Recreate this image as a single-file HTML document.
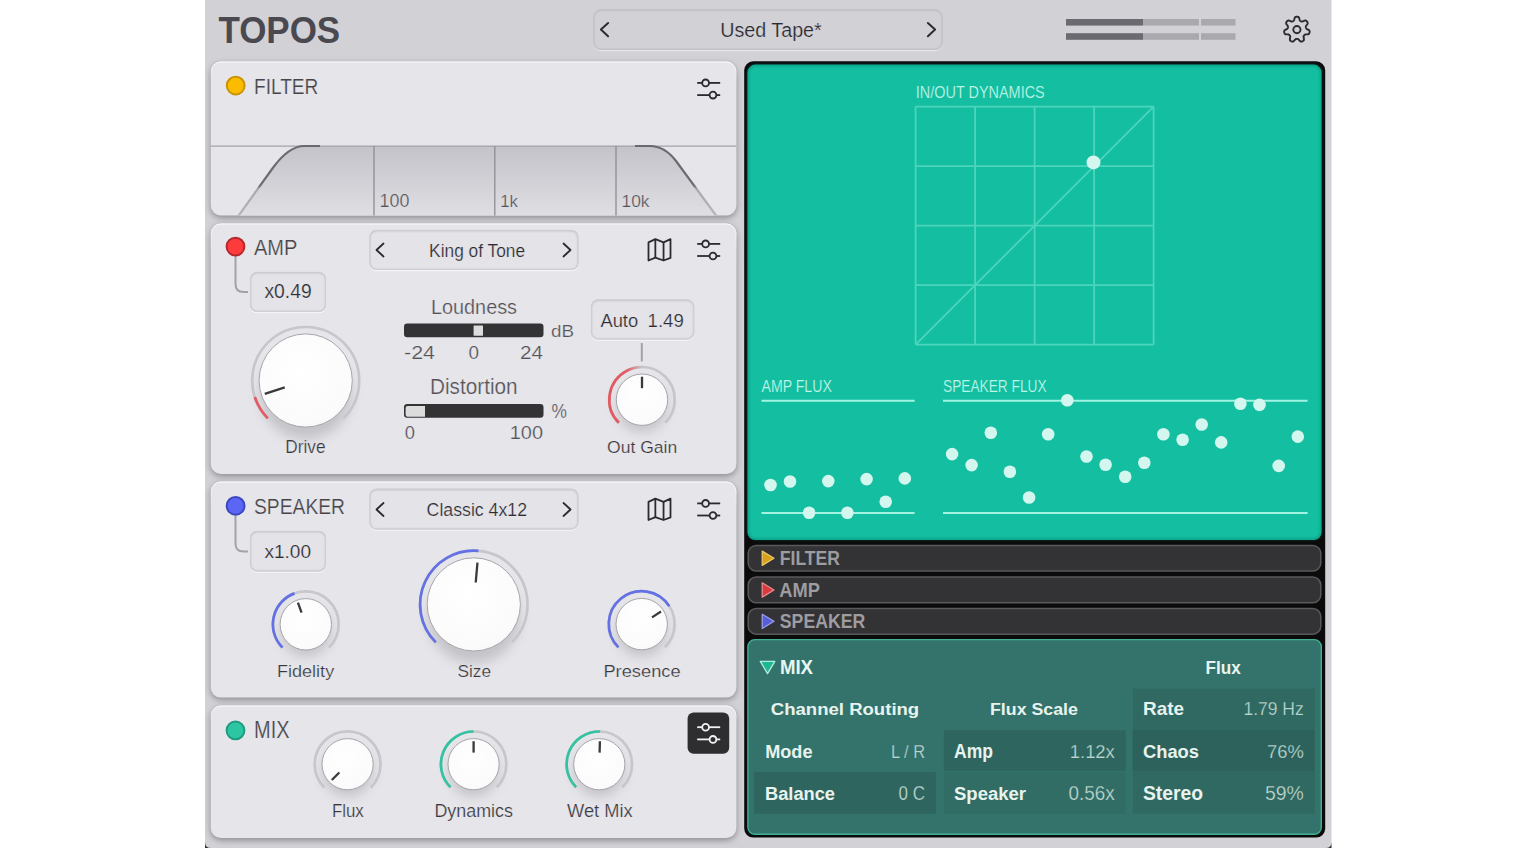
<!DOCTYPE html>
<html><head><meta charset="utf-8"><title>TOPOS</title>
<style>
html,body{margin:0;padding:0;background:#ffffff;width:1536px;height:848px;overflow:hidden}
svg{display:block;font-family:"Liberation Sans",sans-serif}
</style></head><body>
<svg width="1536" height="848" viewBox="0 0 1536 848">
<defs>
<filter id="kshadow" x="-50%" y="-50%" width="200%" height="200%"><feGaussianBlur stdDeviation="6"/></filter>
<filter id="pshadow" x="-10%" y="-10%" width="120%" height="130%"><feGaussianBlur stdDeviation="3"/></filter>
<filter id="blur1"><feGaussianBlur stdDeviation="1"/></filter>
<linearGradient id="phl" x1="0" y1="0" x2="0" y2="1"><stop offset="0" stop-color="#fbfaff"/><stop offset="0.15" stop-color="#e6e5ea" stop-opacity="0"/></linearGradient>
<radialGradient id="knobg" cx="0.45" cy="0.4" r="0.7"><stop offset="0" stop-color="#ffffff"/><stop offset="0.8" stop-color="#fbfbfc"/><stop offset="1" stop-color="#f1f1f3"/></radialGradient>
<linearGradient id="fillg" x1="0" y1="146" x2="0" y2="215" gradientUnits="userSpaceOnUse"><stop offset="0" stop-color="#c4c3c9"/><stop offset="1" stop-color="#dfdee3"/></linearGradient>
<linearGradient id="curveg" x1="0" y1="146" x2="0" y2="215" gradientUnits="userSpaceOnUse"><stop offset="0" stop-color="#6a6970"/><stop offset="0.58" stop-color="#6e6d73"/><stop offset="0.62" stop-color="#a9a8ad"/><stop offset="1" stop-color="#b5b4b9"/></linearGradient>
<linearGradient id="boxg" x1="0" y1="0" x2="0" y2="1"><stop offset="0" stop-color="#dddce1"/><stop offset="0.35" stop-color="#e3e2e7"/><stop offset="1" stop-color="#e5e4e9"/></linearGradient>
<clipPath id="fclip"><rect x="210.8" y="61.5" width="525.6" height="154" rx="10"/></clipPath>
<clipPath id="vclip"><rect x="747.4" y="64.6" width="574.2" height="475.4" rx="8"/></clipPath>
</defs>
<rect x="205" y="0" width="1126.5" height="848" fill="#d2d1d6"/>
<path d="M205,842 Q205,848 211,848 L205,848 Z" fill="#333"/>
<path d="M1331.5,842 Q1331.5,848 1325.5,848 L1331.5,848 Z" fill="#333"/>
<text x="218.40" y="42.80" font-size="36.82" font-weight="bold" textLength="121.82" lengthAdjust="spacingAndGlyphs" fill="#4a494f" >TOPOS</text>
<clipPath id="bc1"><rect x="593.3" y="9.3" width="349.5" height="40.7" rx="8"/></clipPath><rect x="593.3" y="10.5" width="349.5" height="40.7" rx="8" fill="#e8e7ec"/><rect x="593.3" y="9.3" width="349.5" height="40.7" rx="8" fill="#d2d1d6"/><g clip-path="url(#bc1)"><rect x="592.3" y="8.8" width="351.5" height="42.2" rx="9" fill="none" stroke="#b3b2b7" stroke-width="3" filter="url(#blur1)"/></g><rect x="593.6999999999999" y="9.700000000000001" width="348.7" height="39.900000000000006" rx="7.6" fill="none" stroke="#c3c2c7" stroke-width="0.8"/>
<text x="720.30" y="36.60" font-size="19.72" font-weight="normal" textLength="101.40" lengthAdjust="spacingAndGlyphs" fill="#2c2b30" stroke="#d2d1d6" stroke-width="0.22" >Used Tape*</text>
<path d="M608.10,23.00 L600.90,29.60 L608.10,36.20" fill="none" stroke="#2b2b2f" stroke-width="2.0" stroke-linecap="round" stroke-linejoin="round"/>
<path d="M927.90,23.00 L935.10,29.60 L927.90,36.20" fill="none" stroke="#2b2b2f" stroke-width="2.0" stroke-linecap="round" stroke-linejoin="round"/>
<rect x="1066" y="19" width="77" height="6.6" fill="#6b6a70"/>
<rect x="1143" y="19" width="56" height="6.6" fill="#aaa9ae"/>
<rect x="1201" y="19" width="34.5" height="6.6" fill="#aaa9ae"/>
<rect x="1066" y="33.2" width="77" height="6.6" fill="#6b6a70"/>
<rect x="1143" y="33.2" width="56" height="6.6" fill="#aaa9ae"/>
<rect x="1201" y="33.2" width="34.5" height="6.6" fill="#aaa9ae"/>
<path d="M1296.90,16.65 L1297.48,16.69 L1298.05,16.82 L1298.59,17.14 L1299.05,17.77 L1299.37,18.78 L1299.61,19.79 L1299.87,20.45 L1300.19,20.82 L1300.55,21.07 L1300.91,21.27 L1301.30,21.43 L1301.71,21.55 L1302.20,21.57 L1302.88,21.36 L1303.82,20.92 L1304.81,20.55 L1305.59,20.51 L1306.17,20.74 L1306.63,21.10 L1307.02,21.53 L1307.36,22.00 L1307.60,22.53 L1307.70,23.15 L1307.48,23.90 L1306.90,24.78 L1306.26,25.60 L1305.91,26.22 L1305.81,26.70 L1305.84,27.13 L1305.92,27.54 L1306.03,27.94 L1306.19,28.34 L1306.49,28.74 L1307.07,29.14 L1308.00,29.60 L1308.91,30.14 L1309.43,30.73 L1309.61,31.32 L1309.62,31.91 L1309.53,32.48 L1309.36,33.04 L1309.10,33.56 L1308.67,34.02 L1307.95,34.32 L1306.90,34.42 L1305.87,34.42 L1305.16,34.54 L1304.72,34.76 L1304.40,35.05 L1304.13,35.37 L1303.89,35.70 L1303.67,36.08 L1303.55,36.56 L1303.60,37.27 L1303.82,38.28 L1303.96,39.32 L1303.83,40.10 L1303.48,40.61 L1303.02,40.98 L1302.52,41.27 L1301.98,41.48 L1301.41,41.61 L1300.79,41.56 L1300.10,41.19 L1299.37,40.42 L1298.72,39.62 L1298.19,39.14 L1297.74,38.94 L1297.32,38.87 L1296.90,38.85 L1296.48,38.87 L1296.06,38.94 L1295.61,39.14 L1295.08,39.62 L1294.43,40.42 L1293.70,41.19 L1293.01,41.56 L1292.39,41.61 L1291.82,41.48 L1291.28,41.27 L1290.78,40.98 L1290.32,40.61 L1289.97,40.10 L1289.84,39.32 L1289.98,38.28 L1290.20,37.27 L1290.25,36.56 L1290.13,36.08 L1289.91,35.70 L1289.67,35.37 L1289.40,35.05 L1289.08,34.76 L1288.64,34.54 L1287.93,34.42 L1286.90,34.42 L1285.85,34.32 L1285.13,34.02 L1284.70,33.56 L1284.44,33.04 L1284.27,32.48 L1284.18,31.91 L1284.19,31.32 L1284.37,30.73 L1284.89,30.14 L1285.80,29.60 L1286.73,29.14 L1287.31,28.74 L1287.61,28.34 L1287.77,27.94 L1287.88,27.54 L1287.96,27.13 L1287.99,26.70 L1287.89,26.22 L1287.54,25.60 L1286.90,24.78 L1286.32,23.90 L1286.10,23.15 L1286.20,22.53 L1286.44,22.00 L1286.78,21.53 L1287.17,21.10 L1287.63,20.74 L1288.21,20.51 L1288.99,20.55 L1289.98,20.92 L1290.92,21.36 L1291.60,21.57 L1292.09,21.55 L1292.50,21.43 L1292.89,21.27 L1293.25,21.07 L1293.61,20.82 L1293.93,20.45 L1294.19,19.79 L1294.43,18.78 L1294.75,17.77 L1295.21,17.14 L1295.75,16.82 L1296.32,16.69 L1296.90,16.65 Z" fill="none" stroke="#2b2b2f" stroke-width="1.9" stroke-linejoin="round"/><circle cx="1296.9" cy="29.6" r="3.6" fill="none" stroke="#2b2b2f" stroke-width="1.9"/>
<rect x="210.8" y="61.5" width="525.5999999999999" height="154.0" rx="10" fill="#000" fill-opacity="0.34" filter="url(#pshadow)" transform="translate(0,2.2)"/><rect x="210.8" y="61.5" width="525.5999999999999" height="154.0" rx="10" fill="#e6e5ea"/><rect x="211.3" y="62.0" width="524.5999999999999" height="153.0" rx="9.5" fill="none" stroke="url(#phl)" stroke-width="1"/>
<rect x="210.8" y="223.5" width="525.5999999999999" height="250.5" rx="10" fill="#000" fill-opacity="0.34" filter="url(#pshadow)" transform="translate(0,2.2)"/><rect x="210.8" y="223.5" width="525.5999999999999" height="250.5" rx="10" fill="#e6e5ea"/><rect x="211.3" y="224.0" width="524.5999999999999" height="249.5" rx="9.5" fill="none" stroke="url(#phl)" stroke-width="1"/>
<rect x="210.8" y="481.5" width="525.5999999999999" height="216.10000000000002" rx="10" fill="#000" fill-opacity="0.34" filter="url(#pshadow)" transform="translate(0,2.2)"/><rect x="210.8" y="481.5" width="525.5999999999999" height="216.10000000000002" rx="10" fill="#e6e5ea"/><rect x="211.3" y="482.0" width="524.5999999999999" height="215.10000000000002" rx="9.5" fill="none" stroke="url(#phl)" stroke-width="1"/>
<rect x="210.8" y="705.5" width="525.5999999999999" height="132.5" rx="10" fill="#000" fill-opacity="0.34" filter="url(#pshadow)" transform="translate(0,2.2)"/><rect x="210.8" y="705.5" width="525.5999999999999" height="132.5" rx="10" fill="#e6e5ea"/><rect x="211.3" y="706.0" width="524.5999999999999" height="131.5" rx="9.5" fill="none" stroke="url(#phl)" stroke-width="1"/>
<circle cx="235.7" cy="85.6" r="8.9" fill="#fbbc00" stroke="#c99400" stroke-width="2"/>
<text x="254.00" y="93.70" font-size="22.97" font-weight="normal" textLength="64.39" lengthAdjust="spacingAndGlyphs" fill="#454449" stroke="#e6e5ea" stroke-width="0.22" >FILTER</text>
<line x1="697.2" y1="82.9" x2="702.2" y2="82.9" stroke="#2b2b2f" stroke-width="1.8"/>
<line x1="709.0" y1="82.9" x2="720.2" y2="82.9" stroke="#2b2b2f" stroke-width="1.8"/>
<circle cx="705.6" cy="82.9" r="3.4" fill="none" stroke="#2b2b2f" stroke-width="1.8"/>
<line x1="697.2" y1="95.1" x2="709.6" y2="95.1" stroke="#2b2b2f" stroke-width="1.8"/>
<line x1="716.4" y1="95.1" x2="720.2" y2="95.1" stroke="#2b2b2f" stroke-width="1.8"/>
<circle cx="713.0" cy="95.1" r="3.4" fill="none" stroke="#2b2b2f" stroke-width="1.8"/>
<g clip-path="url(#fclip)">
<path d="M238.4,216 L272.8,168 Q288.8,146 304.3,146 L649.7,146 Q664.7,146 676,161 L716.4,216 Z" fill="url(#fillg)"/>
<line x1="205" y1="146.1" x2="740" y2="146.1" stroke="#a3a2a7" stroke-width="1.4"/>
<line x1="374" y1="146" x2="374" y2="216" stroke="#8d8c91" stroke-width="1.3"/>
<line x1="494.8" y1="146" x2="494.8" y2="216" stroke="#8d8c91" stroke-width="1.3"/>
<line x1="616" y1="146" x2="616" y2="216" stroke="#8d8c91" stroke-width="1.3"/>
<path d="M238.4,216 L272.8,168 Q288.8,146 304.3,146 L320,146" fill="none" stroke="url(#curveg)" stroke-width="2.2"/>
<path d="M635,146 L649.7,146 Q664.7,146 676,161 L716.4,216" fill="none" stroke="url(#curveg)" stroke-width="2.2"/>
</g>
<text x="379.60" y="207.00" font-size="17.48" font-weight="normal" textLength="29.91" lengthAdjust="spacingAndGlyphs" fill="#535257" stroke="#e6e5ea" stroke-width="0.22" >100</text>
<text x="500.20" y="207.00" font-size="16.83" font-weight="normal" textLength="17.77" lengthAdjust="spacingAndGlyphs" fill="#535257" stroke="#e6e5ea" stroke-width="0.22" >1k</text>
<text x="621.50" y="207.00" font-size="16.83" font-weight="normal" textLength="28.07" lengthAdjust="spacingAndGlyphs" fill="#535257" stroke="#e6e5ea" stroke-width="0.22" >10k</text>
<path d="M235.5,256 L235.5,284 Q235.5,292 243.5,292 L248,292" fill="none" stroke="#a3a2a7" stroke-width="2"/>
<circle cx="235.5" cy="246.6" r="8.9" fill="#fd3b3d" stroke="#b5282e" stroke-width="2"/>
<text x="254.00" y="254.50" font-size="22.67" font-weight="normal" textLength="43.40" lengthAdjust="spacingAndGlyphs" fill="#454449" stroke="#e6e5ea" stroke-width="0.22" >AMP</text>
<clipPath id="bc2"><rect x="369.4" y="230" width="209.0" height="40" rx="7"/></clipPath><rect x="369.4" y="231.2" width="209.0" height="40" rx="7" fill="#f7f6fb"/><rect x="369.4" y="230" width="209.0" height="40" rx="7" fill="#e4e3e8"/><g clip-path="url(#bc2)"><rect x="368.4" y="229.5" width="211.0" height="41.5" rx="8" fill="none" stroke="#b9b8bd" stroke-width="3" filter="url(#blur1)"/></g><rect x="369.79999999999995" y="230.4" width="208.2" height="39.2" rx="6.6" fill="none" stroke="#cfced3" stroke-width="0.8"/>
<text x="429.10" y="256.90" font-size="18.76" font-weight="normal" textLength="95.99" lengthAdjust="spacingAndGlyphs" fill="#2c2b30" stroke="#e3e2e7" stroke-width="0.22" >King of Tone</text>
<path d="M383.50,243.50 L376.50,250.00 L383.50,256.50" fill="none" stroke="#2b2b2f" stroke-width="1.8" stroke-linecap="round" stroke-linejoin="round"/>
<path d="M563.50,243.50 L570.50,250.00 L563.50,256.50" fill="none" stroke="#2b2b2f" stroke-width="1.8" stroke-linecap="round" stroke-linejoin="round"/>
<path d="M648.50,242.40 L655.35,239.10 L663.55,242.40 L670.50,239.10 L670.50,257.90 L663.55,260.50 L655.35,257.60 L648.50,260.50 Z" fill="none" stroke="#2b2b2f" stroke-width="1.8" stroke-linejoin="round"/><line x1="655.35" y1="239.10" x2="655.35" y2="257.60" stroke="#2b2b2f" stroke-width="1.8"/><line x1="663.55" y1="242.40" x2="663.55" y2="260.50" stroke="#2b2b2f" stroke-width="1.8"/>
<line x1="697.2" y1="243.9" x2="702.2" y2="243.9" stroke="#2b2b2f" stroke-width="1.8"/>
<line x1="709.0" y1="243.9" x2="720.2" y2="243.9" stroke="#2b2b2f" stroke-width="1.8"/>
<circle cx="705.6" cy="243.9" r="3.4" fill="none" stroke="#2b2b2f" stroke-width="1.8"/>
<line x1="697.2" y1="256.0" x2="709.6" y2="256.0" stroke="#2b2b2f" stroke-width="1.8"/>
<line x1="716.4" y1="256.0" x2="720.2" y2="256.0" stroke="#2b2b2f" stroke-width="1.8"/>
<circle cx="713.0" cy="256.0" r="3.4" fill="none" stroke="#2b2b2f" stroke-width="1.8"/>
<clipPath id="bc3"><rect x="250" y="272" width="76" height="40" rx="7"/></clipPath><rect x="250" y="273.2" width="76" height="40" rx="7" fill="#f7f6fb"/><rect x="250" y="272" width="76" height="40" rx="7" fill="#e4e3e8"/><g clip-path="url(#bc3)"><rect x="249" y="271.5" width="78" height="41.5" rx="8" fill="none" stroke="#b9b8bd" stroke-width="3" filter="url(#blur1)"/></g><rect x="250.4" y="272.4" width="75.2" height="39.2" rx="6.6" fill="none" stroke="#cfced3" stroke-width="0.8"/>
<text x="264.40" y="298.40" font-size="19.34" font-weight="normal" textLength="47.31" lengthAdjust="spacingAndGlyphs" fill="#2c2b30" stroke="#e3e2e7" stroke-width="0.22" >x0.49</text>
<text x="431.00" y="313.80" font-size="19.72" font-weight="normal" textLength="86.00" lengthAdjust="spacingAndGlyphs" fill="#545358" stroke="#e6e5ea" stroke-width="0.22" >Loudness</text>
<rect x="404" y="323.6" width="139.5" height="13.7" rx="3.2" fill="#333335"/>
<rect x="473.6" y="325.4" width="9.4" height="10.4" rx="0.5" fill="#dcdcdd"/>
<text x="551.00" y="337.00" font-size="17.24" font-weight="normal" textLength="23.00" lengthAdjust="spacingAndGlyphs" fill="#545358" stroke="#e6e5ea" stroke-width="0.22" >dB</text>
<text x="404.00" y="359.00" font-size="18.62" font-weight="normal" textLength="31.01" lengthAdjust="spacingAndGlyphs" fill="#545358" stroke="#e6e5ea" stroke-width="0.22" >-24</text>
<text x="468.50" y="359.00" font-size="18.62" font-weight="normal" textLength="10.50" lengthAdjust="spacingAndGlyphs" fill="#545358" stroke="#e6e5ea" stroke-width="0.22" >0</text>
<text x="520.00" y="359.00" font-size="18.62" font-weight="normal" textLength="23.01" lengthAdjust="spacingAndGlyphs" fill="#545358" stroke="#e6e5ea" stroke-width="0.22" >24</text>
<text x="430.00" y="394.40" font-size="21.24" font-weight="normal" textLength="87.59" lengthAdjust="spacingAndGlyphs" fill="#545358" stroke="#e6e5ea" stroke-width="0.22" >Distortion</text>
<rect x="404" y="404.1" width="139.5" height="13.7" rx="3.2" fill="#333335"/>
<path d="M407.8,405.9 L425,405.9 L425,416.8 L407.8,416.8 Q405.6,416.8 405.6,414.6 L405.6,408.1 Q405.6,405.9 407.8,405.9 Z" fill="#dcdcdd"/>
<text x="551.60" y="418.00" font-size="19.45" font-weight="normal" textLength="15.40" lengthAdjust="spacingAndGlyphs" fill="#545358" stroke="#e6e5ea" stroke-width="0.22" >%</text>
<text x="404.80" y="439.00" font-size="18.62" font-weight="normal" textLength="10.20" lengthAdjust="spacingAndGlyphs" fill="#545358" stroke="#e6e5ea" stroke-width="0.22" >0</text>
<text x="509.70" y="439.00" font-size="18.62" font-weight="normal" textLength="33.31" lengthAdjust="spacingAndGlyphs" fill="#545358" stroke="#e6e5ea" stroke-width="0.22" >100</text>
<clipPath id="bc4"><rect x="591" y="299.6" width="103.20000000000005" height="39.89999999999998" rx="7"/></clipPath><rect x="591" y="300.8" width="103.20000000000005" height="39.89999999999998" rx="7" fill="#f7f6fb"/><rect x="591" y="299.6" width="103.20000000000005" height="39.89999999999998" rx="7" fill="#e4e3e8"/><g clip-path="url(#bc4)"><rect x="590" y="299.1" width="105.20000000000005" height="41.39999999999998" rx="8" fill="none" stroke="#b9b8bd" stroke-width="3" filter="url(#blur1)"/></g><rect x="591.4" y="300.0" width="102.40000000000005" height="39.09999999999998" rx="6.6" fill="none" stroke="#cfced3" stroke-width="0.8"/>
<text x="600.40" y="326.50" font-size="18.17" font-weight="normal" textLength="37.80" lengthAdjust="spacingAndGlyphs" fill="#2c2b30" stroke="#e3e2e7" stroke-width="0.22" >Auto</text>
<text x="647.60" y="326.50" font-size="17.91" font-weight="normal" textLength="36.21" lengthAdjust="spacingAndGlyphs" fill="#2c2b30" stroke="#e3e2e7" stroke-width="0.22" >1.49</text>
<line x1="641.8" y1="343" x2="641.8" y2="361.5" stroke="#a3a2a7" stroke-width="2"/>
<circle cx="305.7" cy="393.55" r="45.67" fill="#000" fill-opacity="0.15" filter="url(#kshadow)"/>
<path d="M267.87,418.33 A53.50,53.50 0 1 1 343.53,418.33" stroke="#c7c6cb" stroke-width="2.7" fill="none"/>
<path d="M267.87,418.33 A53.50,53.50 0 0 1 254.82,397.03" stroke="#e35a62" stroke-width="2.7" fill="none"/>
<circle cx="305.7" cy="380.5" r="46.6" fill="url(#knobg)" stroke="#a6a5aa" stroke-width="1"/>
<line x1="284.78" y1="387.30" x2="264.80" y2="393.79" stroke="#3a3a3e" stroke-width="2.3" stroke-linecap="butt"/>
<text x="285.30" y="452.70" font-size="17.66" font-weight="normal" textLength="40.19" lengthAdjust="spacingAndGlyphs" fill="#38373c" stroke="#e6e5ea" stroke-width="0.22" >Drive</text>
<circle cx="642.0" cy="406.90" r="25.19" fill="#000" fill-opacity="0.15" filter="url(#kshadow)"/>
<path d="M618.88,422.82 A32.70,32.70 0 1 1 665.12,422.82" stroke="#c7c6cb" stroke-width="2.7" fill="none"/>
<linearGradient id="kf1" gradientUnits="userSpaceOnUse" x1="626.65" y1="370.83" x2="642.00" y2="367.00"><stop offset="0" stop-color="#e35a62"/><stop offset="1" stop-color="#c7c6cb"/></linearGradient>
<path d="M618.88,422.82 A32.70,32.70 0 0 1 626.65,370.83" stroke="#e35a62" stroke-width="2.7" fill="none"/>
<path d="M626.40,370.96 A32.70,32.70 0 0 1 642.00,367.00" stroke="url(#kf1)" stroke-width="2.7" fill="none"/>
<circle cx="642.0" cy="399.7" r="25.7" fill="url(#knobg)" stroke="#a6a5aa" stroke-width="1"/>
<line x1="642.00" y1="388.20" x2="642.00" y2="376.70" stroke="#3a3a3e" stroke-width="2.3" stroke-linecap="butt"/>
<text x="607.00" y="452.70" font-size="16.55" font-weight="normal" textLength="70.20" lengthAdjust="spacingAndGlyphs" fill="#38373c" stroke="#e6e5ea" stroke-width="0.22" >Out Gain</text>
<path d="M235.5,515.5 L235.5,543.5 Q235.5,551.5 243.5,551.5 L248,551.5" fill="none" stroke="#a3a2a7" stroke-width="2"/>
<circle cx="235.6" cy="505.8" r="8.9" fill="#5b66f5" stroke="#3c47bf" stroke-width="2"/>
<text x="254.00" y="514.20" font-size="22.92" font-weight="normal" textLength="91.00" lengthAdjust="spacingAndGlyphs" fill="#454449" stroke="#e6e5ea" stroke-width="0.22" >SPEAKER</text>
<clipPath id="bc5"><rect x="369.4" y="488.8" width="209.0" height="40.80000000000001" rx="7"/></clipPath><rect x="369.4" y="490.0" width="209.0" height="40.80000000000001" rx="7" fill="#f7f6fb"/><rect x="369.4" y="488.8" width="209.0" height="40.80000000000001" rx="7" fill="#e4e3e8"/><g clip-path="url(#bc5)"><rect x="368.4" y="488.3" width="211.0" height="42.30000000000001" rx="8" fill="none" stroke="#b9b8bd" stroke-width="3" filter="url(#blur1)"/></g><rect x="369.79999999999995" y="489.2" width="208.2" height="40.000000000000014" rx="6.6" fill="none" stroke="#cfced3" stroke-width="0.8"/>
<text x="426.60" y="516.00" font-size="18.48" font-weight="normal" textLength="100.40" lengthAdjust="spacingAndGlyphs" fill="#2c2b30" stroke="#e3e2e7" stroke-width="0.22" >Classic 4x12</text>
<path d="M383.50,503.00 L376.50,509.50 L383.50,516.00" fill="none" stroke="#2b2b2f" stroke-width="1.8" stroke-linecap="round" stroke-linejoin="round"/>
<path d="M563.50,503.00 L570.50,509.50 L563.50,516.00" fill="none" stroke="#2b2b2f" stroke-width="1.8" stroke-linecap="round" stroke-linejoin="round"/>
<path d="M648.50,501.90 L655.35,498.60 L663.55,501.90 L670.50,498.60 L670.50,517.40 L663.55,520.00 L655.35,517.10 L648.50,520.00 Z" fill="none" stroke="#2b2b2f" stroke-width="1.8" stroke-linejoin="round"/><line x1="655.35" y1="498.60" x2="655.35" y2="517.10" stroke="#2b2b2f" stroke-width="1.8"/><line x1="663.55" y1="501.90" x2="663.55" y2="520.00" stroke="#2b2b2f" stroke-width="1.8"/>
<line x1="697.2" y1="503.4" x2="702.2" y2="503.4" stroke="#2b2b2f" stroke-width="1.8"/>
<line x1="709.0" y1="503.4" x2="720.2" y2="503.4" stroke="#2b2b2f" stroke-width="1.8"/>
<circle cx="705.6" cy="503.4" r="3.4" fill="none" stroke="#2b2b2f" stroke-width="1.8"/>
<line x1="697.2" y1="515.5" x2="709.6" y2="515.5" stroke="#2b2b2f" stroke-width="1.8"/>
<line x1="716.4" y1="515.5" x2="720.2" y2="515.5" stroke="#2b2b2f" stroke-width="1.8"/>
<circle cx="713.0" cy="515.5" r="3.4" fill="none" stroke="#2b2b2f" stroke-width="1.8"/>
<clipPath id="bc6"><rect x="250" y="531" width="76" height="40.5" rx="7"/></clipPath><rect x="250" y="532.2" width="76" height="40.5" rx="7" fill="#f7f6fb"/><rect x="250" y="531" width="76" height="40.5" rx="7" fill="#e4e3e8"/><g clip-path="url(#bc6)"><rect x="249" y="530.5" width="78" height="42.0" rx="8" fill="none" stroke="#b9b8bd" stroke-width="3" filter="url(#blur1)"/></g><rect x="250.4" y="531.4" width="75.2" height="39.7" rx="6.6" fill="none" stroke="#cfced3" stroke-width="0.8"/>
<text x="264.40" y="558.00" font-size="19.05" font-weight="normal" textLength="46.61" lengthAdjust="spacingAndGlyphs" fill="#2c2b30" stroke="#e3e2e7" stroke-width="0.22" >x1.00</text>
<circle cx="305.8" cy="631.50" r="25.19" fill="#000" fill-opacity="0.15" filter="url(#kshadow)"/>
<path d="M282.54,647.56 A32.90,32.90 0 1 1 329.06,647.56" stroke="#c7c6cb" stroke-width="2.7" fill="none"/>
<path d="M282.54,647.56 A32.90,32.90 0 0 1 294.55,593.38" stroke="#6371e4" stroke-width="2.7" fill="none"/>
<circle cx="305.8" cy="624.3" r="25.7" fill="url(#knobg)" stroke="#a6a5aa" stroke-width="1"/>
<line x1="301.56" y1="612.65" x2="297.93" y2="602.69" stroke="#3a3a3e" stroke-width="2.3" stroke-linecap="butt"/>
<text x="276.90" y="676.60" font-size="16.97" font-weight="normal" textLength="57.29" lengthAdjust="spacingAndGlyphs" fill="#38373c" stroke="#e6e5ea" stroke-width="0.22" >Fidelity</text>
<circle cx="473.8" cy="617.45" r="45.67" fill="#000" fill-opacity="0.15" filter="url(#kshadow)"/>
<path d="M435.83,642.37 A53.70,53.70 0 1 1 511.77,642.37" stroke="#c7c6cb" stroke-width="2.7" fill="none"/>
<path d="M435.83,642.37 A53.70,53.70 0 0 1 478.48,550.90" stroke="#6371e4" stroke-width="2.7" fill="none"/>
<circle cx="473.8" cy="604.4" r="46.6" fill="url(#knobg)" stroke="#a6a5aa" stroke-width="1"/>
<line x1="475.72" y1="582.48" x2="477.46" y2="562.56" stroke="#3a3a3e" stroke-width="2.3" stroke-linecap="butt"/>
<text x="457.40" y="677.00" font-size="16.97" font-weight="normal" textLength="33.61" lengthAdjust="spacingAndGlyphs" fill="#38373c" stroke="#e6e5ea" stroke-width="0.22" >Size</text>
<circle cx="641.7" cy="631.30" r="25.19" fill="#000" fill-opacity="0.15" filter="url(#kshadow)"/>
<path d="M618.44,647.36 A32.90,32.90 0 1 1 664.96,647.36" stroke="#c7c6cb" stroke-width="2.7" fill="none"/>
<path d="M618.44,647.36 A32.90,32.90 0 1 1 669.29,606.18" stroke="#6371e4" stroke-width="2.7" fill="none"/>
<circle cx="641.7" cy="624.1" r="25.7" fill="url(#knobg)" stroke="#a6a5aa" stroke-width="1"/>
<line x1="652.02" y1="617.40" x2="660.99" y2="611.57" stroke="#3a3a3e" stroke-width="2.3" stroke-linecap="butt"/>
<text x="603.40" y="676.70" font-size="17.01" font-weight="normal" textLength="77.29" lengthAdjust="spacingAndGlyphs" fill="#38373c" stroke="#e6e5ea" stroke-width="0.22" >Presence</text>
<circle cx="235.5" cy="730.4" r="8.9" fill="#2cc6a2" stroke="#1f9c80" stroke-width="2"/>
<text x="254.00" y="738.30" font-size="23.40" font-weight="normal" textLength="35.50" lengthAdjust="spacingAndGlyphs" fill="#454449" stroke="#e6e5ea" stroke-width="0.22" >MIX</text>
<rect x="687.6" y="712.5" width="41.6" height="41.2" rx="6" fill="#2e2e31"/>
<line x1="697.2" y1="727.2" x2="702.2" y2="727.2" stroke="#f2f2f4" stroke-width="1.8"/>
<line x1="709.0" y1="727.2" x2="720.2" y2="727.2" stroke="#f2f2f4" stroke-width="1.8"/>
<circle cx="705.6" cy="727.2" r="3.4" fill="none" stroke="#f2f2f4" stroke-width="1.8"/>
<line x1="697.2" y1="739.4" x2="709.6" y2="739.4" stroke="#f2f2f4" stroke-width="1.8"/>
<line x1="716.4" y1="739.4" x2="720.2" y2="739.4" stroke="#f2f2f4" stroke-width="1.8"/>
<circle cx="713.0" cy="739.4" r="3.4" fill="none" stroke="#f2f2f4" stroke-width="1.8"/>
<circle cx="347.6" cy="771.37" r="25.09" fill="#000" fill-opacity="0.15" filter="url(#kshadow)"/>
<path d="M324.34,787.46 A32.90,32.90 0 1 1 370.86,787.46" stroke="#c7c6cb" stroke-width="2.7" fill="none"/>
<circle cx="347.6" cy="764.2" r="25.6" fill="url(#knobg)" stroke="#a6a5aa" stroke-width="1"/>
<line x1="339.33" y1="772.47" x2="331.83" y2="779.97" stroke="#3a3a3e" stroke-width="2.3" stroke-linecap="butt"/>
<text x="331.90" y="817.00" font-size="17.93" font-weight="normal" textLength="31.90" lengthAdjust="spacingAndGlyphs" fill="#38373c" stroke="#e6e5ea" stroke-width="0.22" >Flux</text>
<circle cx="473.6" cy="771.37" r="25.09" fill="#000" fill-opacity="0.15" filter="url(#kshadow)"/>
<path d="M450.48,787.32 A32.70,32.70 0 1 1 496.72,787.32" stroke="#c7c6cb" stroke-width="2.7" fill="none"/>
<path d="M450.48,787.32 A32.70,32.70 0 0 1 473.60,731.50" stroke="#34c3a2" stroke-width="2.7" fill="none"/>
<circle cx="473.6" cy="764.2" r="25.6" fill="url(#knobg)" stroke="#a6a5aa" stroke-width="1"/>
<line x1="473.60" y1="752.60" x2="473.60" y2="741.20" stroke="#3a3a3e" stroke-width="2.3" stroke-linecap="butt"/>
<text x="434.40" y="817.00" font-size="17.93" font-weight="normal" textLength="78.59" lengthAdjust="spacingAndGlyphs" fill="#38373c" stroke="#e6e5ea" stroke-width="0.22" >Dynamics</text>
<circle cx="599.3" cy="771.37" r="25.09" fill="#000" fill-opacity="0.15" filter="url(#kshadow)"/>
<path d="M576.18,787.32 A32.70,32.70 0 1 1 622.42,787.32" stroke="#c7c6cb" stroke-width="2.7" fill="none"/>
<path d="M576.18,787.32 A32.70,32.70 0 0 1 600.16,731.51" stroke="#34c3a2" stroke-width="2.7" fill="none"/>
<circle cx="599.3" cy="764.2" r="25.6" fill="url(#knobg)" stroke="#a6a5aa" stroke-width="1"/>
<line x1="599.60" y1="752.60" x2="599.90" y2="741.21" stroke="#3a3a3e" stroke-width="2.3" stroke-linecap="butt"/>
<text x="567.00" y="817.00" font-size="17.93" font-weight="normal" textLength="65.60" lengthAdjust="spacingAndGlyphs" fill="#38373c" stroke="#e6e5ea" stroke-width="0.22" >Wet Mix</text>
<rect x="744.2" y="61.3" width="581" height="776.3" rx="9" fill="#0b0b0c"/>
<rect x="747.4" y="64.6" width="574.2" height="475.4" rx="8" fill="#13bea1"/>
<rect x="748.1" y="65.3" width="572.8" height="474" rx="7.5" fill="none" stroke="#0a6f5e" stroke-opacity="0.55" stroke-width="1.4" filter="url(#blur1)"/>
<text x="915.80" y="98.10" font-size="15.59" font-weight="normal" textLength="128.90" lengthAdjust="spacingAndGlyphs" fill="#bdf5e7" stroke="#13bea1" stroke-width="0.15" >IN/OUT DYNAMICS</text>
<line x1="915.60" y1="106.6" x2="915.60" y2="344.6" stroke="#4cd5bc" stroke-width="1.8"/>
<line x1="915.6" y1="106.60" x2="1153.6" y2="106.60" stroke="#4cd5bc" stroke-width="1.8"/>
<line x1="975.10" y1="106.6" x2="975.10" y2="344.6" stroke="#4cd5bc" stroke-width="1.8"/>
<line x1="915.6" y1="166.10" x2="1153.6" y2="166.10" stroke="#4cd5bc" stroke-width="1.8"/>
<line x1="1034.60" y1="106.6" x2="1034.60" y2="344.6" stroke="#4cd5bc" stroke-width="1.8"/>
<line x1="915.6" y1="225.60" x2="1153.6" y2="225.60" stroke="#4cd5bc" stroke-width="1.8"/>
<line x1="1094.10" y1="106.6" x2="1094.10" y2="344.6" stroke="#4cd5bc" stroke-width="1.8"/>
<line x1="915.6" y1="285.10" x2="1153.6" y2="285.10" stroke="#4cd5bc" stroke-width="1.8"/>
<line x1="1153.60" y1="106.6" x2="1153.60" y2="344.6" stroke="#4cd5bc" stroke-width="1.8"/>
<line x1="915.6" y1="344.60" x2="1153.6" y2="344.60" stroke="#4cd5bc" stroke-width="1.8"/>
<line x1="915.6" y1="344.6" x2="1153.6" y2="106.6" stroke="#4cd5bc" stroke-width="1.8"/>
<circle cx="1093.5" cy="162.4" r="7" fill="#d3f6ee"/>
<text x="761.50" y="392.30" font-size="16.42" font-weight="normal" textLength="70.30" lengthAdjust="spacingAndGlyphs" fill="#bdf5e7" stroke="#13bea1" stroke-width="0.15" >AMP FLUX</text>
<text x="943.00" y="392.30" font-size="16.19" font-weight="normal" textLength="103.60" lengthAdjust="spacingAndGlyphs" fill="#bdf5e7" stroke="#13bea1" stroke-width="0.15" >SPEAKER FLUX</text>
<line x1="761.5" y1="400.7" x2="914.6" y2="400.7" stroke="#a2f4e2" stroke-width="2"/>
<line x1="761.5" y1="512.9" x2="914.6" y2="512.9" stroke="#a2f4e2" stroke-width="2"/>
<line x1="943" y1="400.7" x2="1307.6" y2="400.7" stroke="#a2f4e2" stroke-width="2"/>
<line x1="943" y1="512.9" x2="1307.6" y2="512.9" stroke="#a2f4e2" stroke-width="2"/>
<circle cx="770.5" cy="485" r="6.3" fill="#d3f6ee"/>
<circle cx="790" cy="481.5" r="6.3" fill="#d3f6ee"/>
<circle cx="809.1" cy="512.7" r="6.3" fill="#d3f6ee"/>
<circle cx="828.3" cy="481.1" r="6.3" fill="#d3f6ee"/>
<circle cx="847.4" cy="512.7" r="6.3" fill="#d3f6ee"/>
<circle cx="866.6" cy="479.1" r="6.3" fill="#d3f6ee"/>
<circle cx="885.7" cy="501.8" r="6.3" fill="#d3f6ee"/>
<circle cx="904.8" cy="478.4" r="6.3" fill="#d3f6ee"/>
<circle cx="952.1" cy="454.1" r="6.3" fill="#d3f6ee"/>
<circle cx="971.6" cy="465.1" r="6.3" fill="#d3f6ee"/>
<circle cx="990.8" cy="432.7" r="6.3" fill="#d3f6ee"/>
<circle cx="1009.9" cy="471.7" r="6.3" fill="#d3f6ee"/>
<circle cx="1029.1" cy="497.5" r="6.3" fill="#d3f6ee"/>
<circle cx="1048.2" cy="434.2" r="6.3" fill="#d3f6ee"/>
<circle cx="1067.3" cy="400.2" r="6.3" fill="#d3f6ee"/>
<circle cx="1086.5" cy="456.5" r="6.3" fill="#d3f6ee"/>
<circle cx="1105.6" cy="464.7" r="6.3" fill="#d3f6ee"/>
<circle cx="1125.2" cy="476.8" r="6.3" fill="#d3f6ee"/>
<circle cx="1144.3" cy="462.7" r="6.3" fill="#d3f6ee"/>
<circle cx="1163.4" cy="434.2" r="6.3" fill="#d3f6ee"/>
<circle cx="1182.6" cy="439.7" r="6.3" fill="#d3f6ee"/>
<circle cx="1201.7" cy="424.5" r="6.3" fill="#d3f6ee"/>
<circle cx="1221.2" cy="442.4" r="6.3" fill="#d3f6ee"/>
<circle cx="1240.4" cy="403.75" r="6.3" fill="#d3f6ee"/>
<circle cx="1259.5" cy="404.9" r="6.3" fill="#d3f6ee"/>
<circle cx="1278.7" cy="465.9" r="6.3" fill="#d3f6ee"/>
<circle cx="1297.8" cy="436.6" r="6.3" fill="#d3f6ee"/>
<rect x="748.2" y="545.45" width="572.6" height="25.59999999999991" rx="8" fill="#333335" stroke="#59595c" stroke-width="1.5"/>
<path d="M762.2,551.05 L774.0,558.25 L762.2,565.45 Z" fill="#d9a01c" stroke="#eccb6a" stroke-width="1.2" stroke-linejoin="round"/>
<text x="779.80" y="565.35" font-size="19.91" font-weight="bold" textLength="60.11" lengthAdjust="spacingAndGlyphs" fill="#9d9ca0" >FILTER</text>
<rect x="748.2" y="577.05" width="572.6" height="25.800000000000068" rx="8" fill="#333335" stroke="#59595c" stroke-width="1.5"/>
<path d="M762.2,582.75 L774.0,589.95 L762.2,597.15 Z" fill="#d83c40" stroke="#ef8e90" stroke-width="1.2" stroke-linejoin="round"/>
<text x="779.20" y="597.05" font-size="19.91" font-weight="bold" textLength="40.70" lengthAdjust="spacingAndGlyphs" fill="#9d9ca0" >AMP</text>
<rect x="748.2" y="608.55" width="572.6" height="25.600000000000023" rx="8" fill="#333335" stroke="#59595c" stroke-width="1.5"/>
<path d="M762.2,614.15 L774.0,621.35 L762.2,628.55 Z" fill="#575ed6" stroke="#9ca0ee" stroke-width="1.2" stroke-linejoin="round"/>
<text x="779.80" y="628.45" font-size="19.63" font-weight="bold" textLength="85.49" lengthAdjust="spacingAndGlyphs" fill="#9d9ca0" >SPEAKER</text>
<rect x="747.9" y="639.6" width="573.4" height="194.6" rx="7" fill="#33736b" stroke="#41b194" stroke-width="1.4"/>
<path d="M760.3,661.3 L774.8,661.3 L767.55,673.6 Z" fill="#1fb792" stroke="#aeeedd" stroke-width="1.3" stroke-linejoin="round"/>
<text x="779.90" y="673.90" font-size="20.35" font-weight="bold" textLength="33.10" lengthAdjust="spacingAndGlyphs" fill="#e6f7f2" >MIX</text>
<rect x="754.1" y="771.9" width="181.8" height="41.9" fill="#2e665f"/>
<rect x="943.9" y="730.3" width="181.7" height="40.6" fill="#2e665f"/>
<rect x="943.9" y="771.9" width="181.7" height="41.9" fill="#316d65"/>
<rect x="1132.8" y="688.6" width="181.8" height="125.2" fill="#2f6961"/>
<rect x="1132.8" y="730.3" width="181.8" height="40.6" fill="#2c625b"/>
<text x="1205.60" y="673.70" font-size="17.79" font-weight="bold" textLength="35.19" lengthAdjust="spacingAndGlyphs" fill="#e8f3ef" >Flux</text>
<text x="770.80" y="715.30" font-size="17.38" font-weight="bold" textLength="148.40" lengthAdjust="spacingAndGlyphs" fill="#e8f3ef" >Channel Routing</text>
<text x="990.00" y="715.30" font-size="17.38" font-weight="bold" textLength="87.90" lengthAdjust="spacingAndGlyphs" fill="#e8f3ef" >Flux Scale</text>
<text x="765.20" y="757.80" font-size="18.48" font-weight="bold" textLength="47.30" lengthAdjust="spacingAndGlyphs" fill="#e8f3ef" >Mode</text>
<text x="891.00" y="757.80" font-size="18.48" font-weight="normal" textLength="34.00" lengthAdjust="spacingAndGlyphs" fill="#bfd6d0" stroke="#306c64" stroke-width="0.25" >L / R</text>
<text x="765.00" y="799.70" font-size="18.90" font-weight="bold" textLength="70.01" lengthAdjust="spacingAndGlyphs" fill="#e8f3ef" >Balance</text>
<text x="898.60" y="799.70" font-size="19.63" font-weight="normal" textLength="26.40" lengthAdjust="spacingAndGlyphs" fill="#bfd6d0" stroke="#306c64" stroke-width="0.25" >0 C</text>
<text x="954.00" y="757.80" font-size="19.48" font-weight="bold" textLength="39.00" lengthAdjust="spacingAndGlyphs" fill="#e8f3ef" >Amp</text>
<text x="1069.80" y="757.80" font-size="19.20" font-weight="normal" textLength="45.01" lengthAdjust="spacingAndGlyphs" fill="#bfd6d0" stroke="#306c64" stroke-width="0.25" >1.12x</text>
<text x="954.00" y="799.70" font-size="18.90" font-weight="bold" textLength="71.99" lengthAdjust="spacingAndGlyphs" fill="#e8f3ef" >Speaker</text>
<text x="1068.60" y="799.70" font-size="19.63" font-weight="normal" textLength="46.21" lengthAdjust="spacingAndGlyphs" fill="#bfd6d0" stroke="#306c64" stroke-width="0.25" >0.56x</text>
<text x="1143.00" y="715.30" font-size="18.31" font-weight="bold" textLength="40.99" lengthAdjust="spacingAndGlyphs" fill="#e8f3ef" >Rate</text>
<text x="1243.40" y="715.30" font-size="18.05" font-weight="normal" textLength="60.41" lengthAdjust="spacingAndGlyphs" fill="#bfd6d0" stroke="#306c64" stroke-width="0.25" >1.79 Hz</text>
<text x="1143.00" y="757.80" font-size="18.48" font-weight="bold" textLength="56.00" lengthAdjust="spacingAndGlyphs" fill="#e8f3ef" >Chaos</text>
<text x="1267.00" y="757.80" font-size="19.20" font-weight="normal" textLength="36.81" lengthAdjust="spacingAndGlyphs" fill="#bfd6d0" stroke="#306c64" stroke-width="0.25" >76%</text>
<text x="1143.00" y="799.70" font-size="19.63" font-weight="bold" textLength="60.01" lengthAdjust="spacingAndGlyphs" fill="#e8f3ef" >Stereo</text>
<text x="1265.00" y="799.70" font-size="19.63" font-weight="normal" textLength="38.81" lengthAdjust="spacingAndGlyphs" fill="#bfd6d0" stroke="#306c64" stroke-width="0.25" >59%</text>
</svg>
</body></html>
